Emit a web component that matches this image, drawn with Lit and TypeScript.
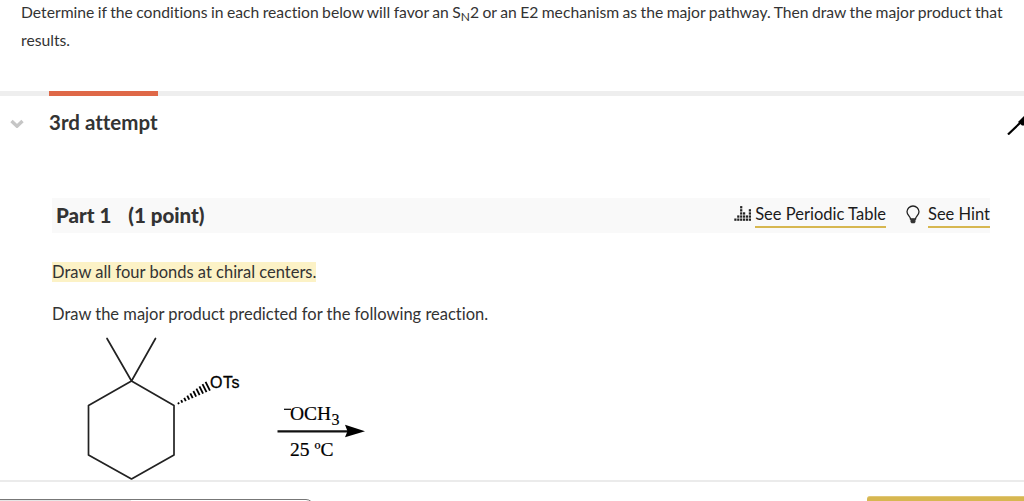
import { LitElement, html, css, svg } from 'lit';
import { customElement, property } from 'lit/decorators.js';

@customElement('reaction-scheme')
export class ReactionScheme extends LitElement {
  static styles = css`
    :host {
      display: block;
      height: 150px;
    }

    svg {
      display: block;
    }

    .bond {
      fill: none;
      stroke: #222;
      stroke-width: 1.7;
      stroke-linejoin: round;
      stroke-linecap: round;
    }

    .hash {
      stroke: #000;
      stroke-width: 1.8;
    }

    .group {
      font-family: 'Liberation Sans', sans-serif;
      font-size: 16px;
      letter-spacing: 0.5px;
      stroke: #000;
      stroke-width: 0.3;
    }

    .reagent {
      font-family: 'Liberation Serif', serif;
      font-size: 19.5px;
      stroke: #000;
      stroke-width: 0.2;
    }

    .small {
      font-size: 16px;
    }
  `;

  // dashes of the wedge get wider towards the leaving group
  hashes() {
    return Array.from({ length: 10 }, (_, i) => {
      const x = 126.5 + i * 3.25;
      const y = 73.3 - i * 1.9;
      const w = 0.8 + i * 0.4;
      return svg`<line class="hash" x1=${x - w * 0.5} y1=${y - w} x2=${x + w * 0.5} y2=${y + w} />`;
    });
  }

  render() {
    return html`
      <svg width="330" height="150" viewBox="0 0 330 150">
        <path class="bond" d="M79.5 51 L122 75.5 V125 L79.5 149 L36.5 125 V75.5 Z" />
        <path class="bond" d="M55 8.5 L79.5 51 L103.5 8.5" />
        ${this.hashes()}
        <text class="group" x="158" y="57.5">OTs</text>
        <path d="M232 79.3 H239" stroke="#000" stroke-width="1.2" />
        <text class="reagent" x="238" y="90">OCH</text>
        <text class="reagent small" x="279.5" y="94.5">3</text>
        <path d="M225.5 101.3 H300" stroke="#111" stroke-width="2.2" />
        <path d="M293 94.7 L313 101.3 L293 107.3 L295.5 101.3 Z" />
        <text class="reagent" x="238" y="126">25 ºC</text>
      </svg>
    `;
  }
}

@customElement('app-root')
export class AppRoot extends LitElement {
  static styles = css`
    :host {
      display: block;
      height: 501px;
      overflow: hidden;
      background: #fff;
      color: #333;
      font-family: Lato, sans-serif;
      font-size: 16.5px;
      font-variant-ligatures: none;
    }

    p {
      margin: 0;
    }

    .question {
      display: flow-root;
      box-sizing: border-box;
      height: 91px;
      padding-left: 21px;
      font-size: 15.7px;
      line-height: 28px;
      word-spacing: -0.6px;
      white-space: nowrap;
    }

    .question p {
      margin-top: -2px;
    }

    sub {
      font-size: 12px;
      line-height: 0;
      position: relative;
      bottom: -3px;
      vertical-align: baseline;
    }

    .divider {
      height: 5px;
      padding-left: 49px;
      background: #eee;
    }

    .active-tab {
      width: 109px;
      height: 5px;
      background: #df6848;
    }

    .attempt {
      display: flex;
      align-items: center;
      height: 101.5px;
      box-sizing: border-box;
      padding: 0 0 47px 10px;
    }

    .attempt h2 {
      flex: 1;
      margin: -2px 0 0 25px;
      font-size: 20.5px;
      font-weight: 700;
      line-height: 28px;
    }

    .part {
      display: flex;
      align-items: center;
      box-sizing: border-box;
      height: 35.5px;
      margin: 0 34px 0 52px;
      padding-left: 4px;
      background: #f9f9f9;
    }

    .part h3 {
      display: flex;
      gap: 17px;
      flex: 1;
      margin: 0;
      font-size: 20.5px;
      font-weight: 900;
      line-height: 28px;
    }

    .link {
      display: flex;
      align-items: center;
      margin-top: -1px;
      color: #1b1b1b;
    }

    .link span {
      border-bottom: 2px solid #d7b750;
      line-height: 24px;
      white-space: nowrap;
    }

    .link svg {
      margin-bottom: 3px;
    }

    .table span {
      margin-left: 3px;
    }

    .hint {
      margin-left: 20px;
    }

    .hint svg {
      margin-bottom: 0;
    }

    .hint span {
      margin-left: 8px;
    }

    .body {
      padding-left: 52px;
      line-height: 20px;
    }

    .note {
      padding-top: 29px;
    }

    mark {
      display: inline-block;
      height: 20px;
      line-height: 21px;
      background: #fcf2c6;
      color: inherit;
    }

    .task {
      padding-top: 22px;
      padding-bottom: 6px;
    }

    .footer {
      display: flex;
      justify-content: space-between;
      align-items: flex-start;
      height: 21px;
      border-top: 2px solid #ebebeb;
      overflow: hidden;
    }

    .progress {
      width: 316px;
      height: 30px;
      margin: 17px 0 0 -2px;
      box-sizing: border-box;
      border: 1px solid #777;
      border-radius: 0 8px 8px 0;
      background: linear-gradient(#e6e6e6, #e6e6e6) no-repeat 0 0 / 132px 100%;
    }

    .submit {
      width: 157px;
      height: 30px;
      margin-top: 14px;
      box-sizing: border-box;
      border-top: 1px solid #e0c778;
      border-radius: 3px 0 0 0;
      background: #d7b750;
    }
  `;

  @property({ type: String }) attempt = '3rd attempt';
  @property({ type: String }) part = 'Part 1';
  @property({ type: String }) points = '(1 point)';

  tableIcon() {
    // height in dots of every column
    const columns = [1, 2, 5, 3, 2, 4];
    return html`
      <svg width="18" height="17" viewBox="0 0 18 17">
        ${columns.map((count, col) =>
          Array.from({ length: count }, (_, row) => svg`
            <rect x=${0.3 + col * 2.9} y=${13.5 - row * 3.1} width="2.2" height="2.3" fill="#222" />
          `)
        )}
      </svg>
    `;
  }

  render() {
    return html`
      <div class="question">
        <p>Determine if the conditions in each reaction below will favor an S<sub>N</sub>2 or an E2 mechanism as the major pathway. Then draw the major product that<br />results.</p>
      </div>
      <div class="divider"><div class="active-tab"></div></div>

      <div class="attempt">
        <svg width="14" height="10" viewBox="0 0 14 10">
          <path d="M1.5 3 L7 8.2 L12.5 3" fill="none" stroke="#c6c6c6" stroke-width="3.4" />
        </svg>
        <h2>${this.attempt}</h2>
        <svg width="18" height="24" viewBox="0 0 18 24">
          <path d="M2 23.5 L14 12" stroke="#000" stroke-width="2.2" />
          <path d="M12 11 L18 5 V14.5 L16 14.5 Z" />
        </svg>
      </div>

      <div class="part">
        <h3><span>${this.part}</span><span>${this.points}</span></h3>
        <div class="link table">
          ${this.tableIcon()}
          <span>See Periodic Table</span>
        </div>
        <div class="link hint">
          <svg width="14" height="20" viewBox="0 0 14 20">
            <path d="M4.5 14 C4.5 11.5 1 10 1 6.8 A6 5.8 0 0 1 13 6.8 C13 10 9.5 11.5 9.5 14 Z" fill="none" stroke="#222" stroke-width="1.3" />
            <path d="M4.5 14 H9.5 V17 L8.5 18.3 H5.5 L4.5 17 Z" fill="#333" />
          </svg>
          <span>See Hint</span>
        </div>
      </div>

      <div class="body">
        <p class="note"><mark>Draw all four bonds at chiral centers.</mark></p>
        <p class="task">Draw the major product predicted for the following reaction.</p>
        <reaction-scheme></reaction-scheme>
      </div>

      <div class="footer">
        <div class="progress"></div>
        <div class="submit"></div>
      </div>
    `;
  }
}
